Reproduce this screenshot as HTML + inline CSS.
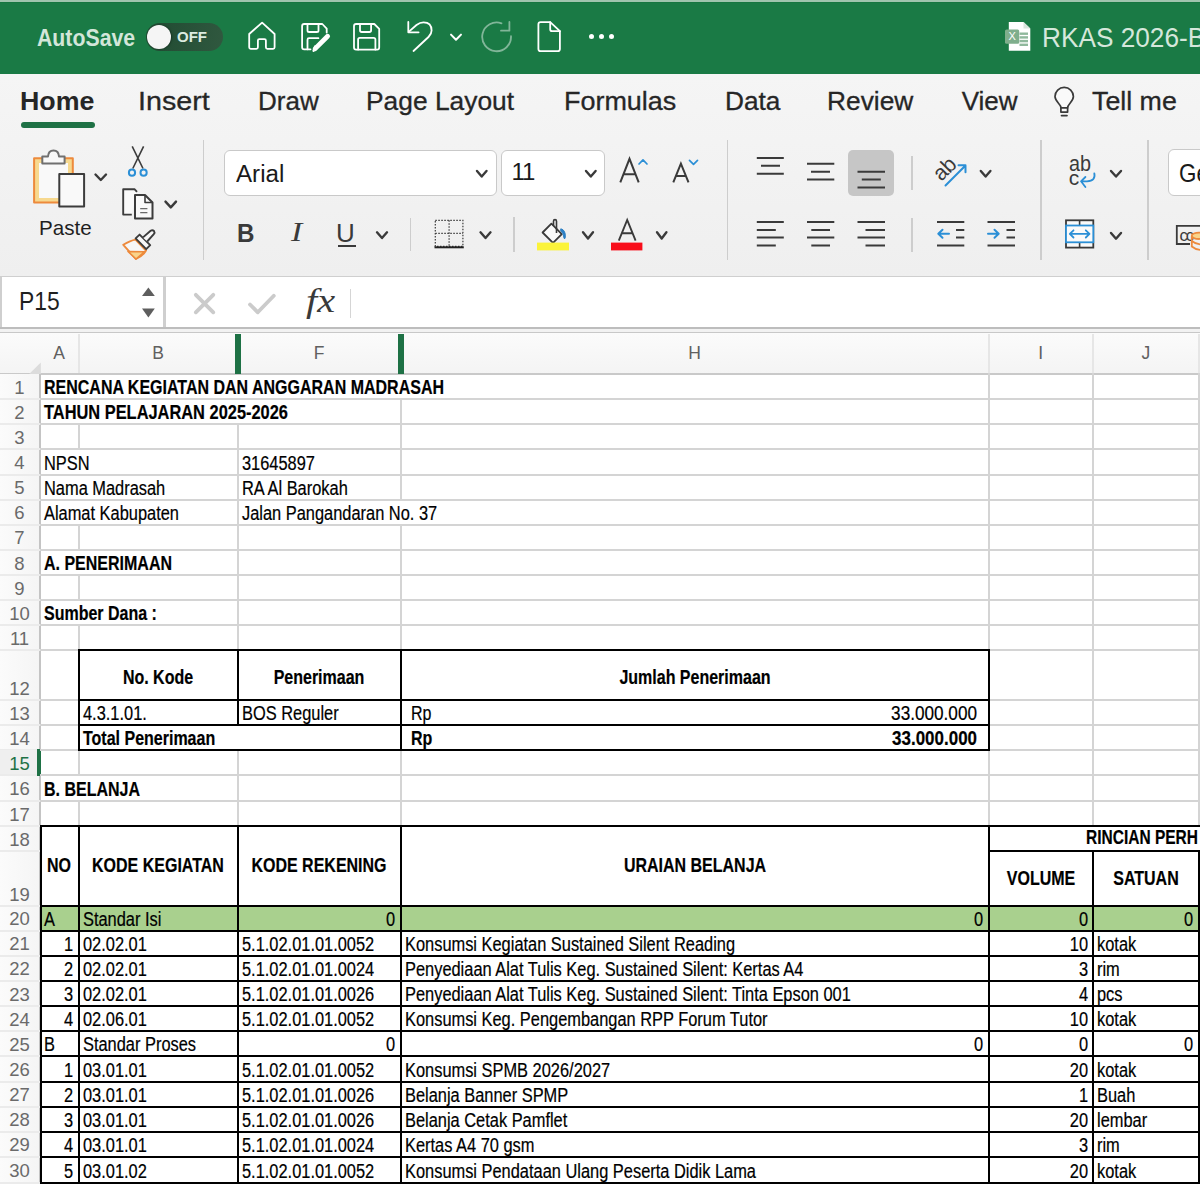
<!DOCTYPE html>
<html><head><meta charset="utf-8">
<style>
html,body{margin:0;padding:0;width:1200px;height:1184px;overflow:hidden;background:#fff;font-family:"Liberation Sans",sans-serif;}
#root{position:absolute;left:0;top:0;width:1200px;height:1184px;overflow:hidden}
#root div{position:absolute}
.t{font-size:20px;line-height:22px;white-space:nowrap;color:#000;-webkit-text-stroke:0.2px currentColor}
.rn{font-size:18.5px;line-height:22px;text-align:center;white-space:nowrap}
.ch{font-size:17.5px;line-height:22px;text-align:center;color:#606060;white-space:nowrap}
.tab{font-size:26px;line-height:30px;color:#262626;white-space:nowrap}
svg{position:absolute;overflow:visible}
</style></head><body><div id="root">
<!-- title bar -->
<div style="left:0;top:0;width:1200px;height:1.5px;background:#a0c4ae"></div>
<div style="left:0;top:1.5px;width:1200px;height:72px;background:#1a7a45"></div>
<div style="left:0;top:2px;width:1200px;height:1px;background:#167640"></div>
<div style="left:36.5px;top:23px;font-size:23px;line-height:30px;font-weight:bold;color:#d3e6d9;white-space:nowrap;transform:scaleX(0.925);transform-origin:0 0">AutoSave</div>
<div style="left:146px;top:23px;width:77px;height:27.5px;border-radius:14px;background:linear-gradient(100deg,#1f4a31,#30583f)"></div>
<div style="left:147px;top:24.7px;width:24px;height:24px;border-radius:12px;background:#f5f5f5;box-shadow:1px 0 2px rgba(0,0,0,0.35)"></div>
<div style="left:177px;top:27px;font-size:15px;line-height:20px;font-weight:bold;color:#dcebe0;white-space:nowrap">OFF</div>
<svg style="left:0;top:0" width="1200" height="74" viewBox="0 0 1200 74" fill="none" stroke="#fff" stroke-width="1.8" stroke-linejoin="round" stroke-linecap="round">
  <!-- home -->
  <path d="M249.2 34 L262.1 22.6 L274.6 34 L274.6 47.3 Q274.6 48.8 273.1 48.8 L267.4 48.8 Q265.9 48.8 265.9 47.3 L265.9 40.6 Q265.9 39.1 264.4 39.1 L259.4 39.1 Q257.9 39.1 257.9 40.6 L257.9 47.3 Q257.9 48.8 256.4 48.8 L250.7 48.8 Q249.2 48.8 249.2 47.3 Z"/>
  <!-- save as -->
  <path d="M310.5 49.3 L304.2 49.3 Q302.1 49.3 302.1 47.2 L302.1 26.1 Q302.1 24 304.2 24 L322.3 24 L326.7 28.6 L326.7 32.6"/>
  <path d="M307.5 24 L307.5 30.4 Q307.5 32 309.1 32 L316.9 32 Q318.5 32 318.5 30.4 L318.5 24"/>
  <path d="M307.5 49.3 L307.5 39.7 Q307.5 38.2 309 38.2 L318.4 38.2"/>
  <path d="M315.2 48.6 L327.6 36.3" stroke-width="4.8"/>
  <path d="M313.6 50.8 L315.2 46.6" stroke-width="2.4"/>
  <!-- save -->
  <path d="M356.1 24 L374.3 24 L379.2 28.9 L379.2 47.5 Q379.2 49.6 377.1 49.6 L356.1 49.6 Q354 49.6 354 47.5 L354 26.1 Q354 24 356.1 24 Z"/>
  <path d="M360 24 L360 30.3 Q360 32 361.7 32 L369.4 32 Q371.1 32 371.1 30.3 L371.1 24"/>
  <path d="M358.1 49.6 L358.1 39.6 Q358.1 37.9 359.8 37.9 L373.7 37.9 Q375.4 37.9 375.4 39.6 L375.4 49.6"/>
  <!-- undo -->
  <path d="M408.3 22 L408.3 32.3 L418.6 32.3"/>
  <path d="M409.5 31.2 L416.5 25 Q420 22.4 423.5 22.4 Q431.6 22.4 431.6 30.6 Q431.6 34 428.5 37 L413.5 51"/>
  <!-- chevron -->
  <path d="M451 34.6 L456 39.8 L461 34.6" stroke-width="2"/>
  <!-- redo -->
  <g stroke="rgba(255,255,255,0.45)">
  <path d="M511 36.2 A14.4 14.4 0 1 1 501.5 23.3"/>
  <path d="M501 30.7 L509.4 30.7 L509.4 22"/>
  </g>
  <!-- new doc -->
  <path d="M550.2 22.1 L540.6 22.1 Q538.4 22.1 538.4 24.3 L538.4 49 Q538.4 51.2 540.6 51.2 L557.7 51.2 Q559.9 51.2 559.9 49 L559.9 31.2 Z"/>
  <path d="M550.2 22.1 L550.2 29.2 Q550.2 31.2 552.2 31.2 L559.9 31.2"/>
</svg>
<div style="left:589px;top:34.2px;width:5px;height:5px;border-radius:3px;background:#fff"></div>
<div style="left:599px;top:34.2px;width:5px;height:5px;border-radius:3px;background:#fff"></div>
<div style="left:609px;top:34.2px;width:5px;height:5px;border-radius:3px;background:#fff"></div>
<!-- excel doc icon -->
<svg style="left:0;top:0" width="1200" height="74" viewBox="0 0 1200 74">
  <path d="M1008.8 22 L1023.5 22 L1030.3 28.6 L1030.3 50.7 L1008.8 50.7 Z" fill="#fff"/>
  <path d="M1023.5 22 L1023.5 28.6 L1030.3 28.6 Z" fill="#d9e6dd"/>
  <rect x="1019.5" y="32.5" width="8.5" height="2.4" fill="#8fb89c"/>
  <rect x="1019.5" y="36.2" width="8.5" height="2.4" fill="#8fb89c"/>
  <rect x="1019.5" y="39.9" width="8.5" height="2.4" fill="#8fb89c"/>
  <rect x="1019.5" y="43.6" width="8.5" height="2.4" fill="#8fb89c"/>
  <rect x="1005" y="29.5" width="14.2" height="14.2" rx="1.5" fill="#7fae8c"/>
  <text x="1012.1" y="40.4" font-family="Liberation Sans" font-size="11" fill="#fff" text-anchor="middle">X</text>
</svg>
<div style="left:1041.5px;top:22px;font-size:27.6px;line-height:32px;color:#d5e7db;white-space:nowrap;transform:scaleX(0.95);transform-origin:0 0">RKAS 2026-B</div>

<!-- formula bar -->
<div style="left:0;top:277px;width:1200px;height:50px;background:#fff"></div>
<div style="left:0;top:277px;width:2px;height:50px;background:#cfcfcf"></div>
<div style="left:163px;top:277px;width:3px;height:50px;background:#cfcfcf"></div>
<div style="left:0;top:327px;width:1200px;height:1.5px;background:#bdbdbd"></div>
<div style="left:0;top:328.5px;width:1200px;height:3px;background:#f2f2f2"></div>
<div style="left:0;top:331.5px;width:1200px;height:1.5px;background:#c8c8c8"></div>
<div style="left:19px;top:285.5px;font-size:25.4px;line-height:30px;color:#1f1f1f;transform:scaleX(0.9);transform-origin:0 0">P15</div>

<!-- ribbon -->
<div style="left:0;top:73.5px;width:1200px;height:202px;background:linear-gradient(#f5f5f5,#efefef)"></div>
<div style="left:0;top:275.5px;width:1200px;height:1.5px;background:#cfcfcf"></div>
<!-- tabs -->
<div class="tab" style="left:19.94px;top:86px;font-weight:bold;transform:scaleX(1.03);transform-origin:0 0">Home</div>
<div style="left:21px;top:122px;width:74px;height:6px;border-radius:3px;background:#1e7145"></div>
<div class="tab" style="left:137.99px;top:86px;-webkit-text-stroke:0.3px #262626;transform:scaleX(1.103);transform-origin:0 0">Insert</div>
<div class="tab" style="left:258.00px;top:86px;-webkit-text-stroke:0.3px #262626;transform:scaleX(1.0);transform-origin:0 0">Draw</div>
<div class="tab" style="left:365.97px;top:86px;-webkit-text-stroke:0.3px #262626;transform:scaleX(1.014);transform-origin:0 0">Page Layout</div>
<div class="tab" style="left:564.18px;top:86px;-webkit-text-stroke:0.3px #262626;transform:scaleX(1.036);transform-origin:0 0">Formulas</div>
<div class="tab" style="left:724.98px;top:86px;-webkit-text-stroke:0.3px #262626;transform:scaleX(1.01);transform-origin:0 0">Data</div>
<div class="tab" style="left:826.98px;top:86px;-webkit-text-stroke:0.3px #262626;transform:scaleX(1.012);transform-origin:0 0">Review</div>
<div class="tab" style="left:961.70px;top:86px;-webkit-text-stroke:0.3px #262626;transform:scaleX(1.0);transform-origin:0 0">View</div>
<div class="tab" style="left:1092.37px;top:86px;-webkit-text-stroke:0.3px #262626;transform:scaleX(1.03);transform-origin:0 0">Tell me</div>
<svg style="left:0;top:0" width="1200" height="280" viewBox="0 0 1200 280" fill="none" stroke="#3a3a3a" stroke-width="1.6" stroke-linecap="round" stroke-linejoin="round">
  <!-- bulb -->
  <path d="M1061 107.8 C1061 104 1055 101.5 1055 96.6 A9.2 9.2 0 1 1 1073.4 96.6 C1073.4 101.5 1067.6 104 1067.6 107.8 Z" fill="#fafafa" stroke-width="1.7"/>
  <rect x="1060.9" y="107.8" width="6.7" height="4.3" fill="#fafafa" stroke-width="1.7"/>
  <path d="M1061.6 115.6 H1066.9" stroke-width="1.9"/>
</svg>

<!-- clipboard group -->
<svg style="left:0;top:0" width="1200" height="280" viewBox="0 0 1200 280" fill="none" stroke-linejoin="round">
  <!-- paste board -->
  <rect x="34.1" y="158.2" width="38.7" height="44.3" fill="#f7d98f" stroke="#ed8a3c" stroke-width="2"/>
  <rect x="39" y="163" width="29" height="35" fill="#f9f9f9" stroke="none"/>
  <path d="M42.3 163.5 V156.5 H48 Q48.3 150.4 53.5 150.4 Q58.7 150.4 59 156.5 H64.6 V163.5 Z" fill="#f9f9f9" stroke="#707070" stroke-width="2"/>
  <rect x="59.3" y="174" width="24.8" height="32.5" fill="#f9f9f9" stroke="#3c3c3c" stroke-width="2"/>
  <path d="M95.5 174.5 L100.8 180 L106 174.5" stroke="#3a3a3a" stroke-width="2.4" stroke-linecap="round"/>
  <!-- scissors -->
  <path d="M132.2 146.3 L143 168.5 M143.6 146.3 L132.8 168.5" stroke="#3c3c3c" stroke-width="1.6"/>
  <circle cx="132" cy="172.7" r="3.1" stroke="#2b8fd6" stroke-width="2"/>
  <circle cx="143.6" cy="172.7" r="3.1" stroke="#2b8fd6" stroke-width="2"/>
  <!-- copy -->
  <path d="M131.8 214.6 L123.2 214.6 L123.2 189.3 L134.7 189.3 L137 191.8" fill="#f9f9f9" stroke="#3c3c3c" stroke-width="1.9"/>
  <path d="M135 218.5 L135 195 L145 195 L152.5 202.5 L152.5 218.5 Z" fill="#f9f9f9" stroke="#3c3c3c" stroke-width="2"/>
  <path d="M145 195 L145 202.5 L152.5 202.5" stroke="#3c3c3c" stroke-width="1.6"/>
  <path d="M140.2 208.6 L147.4 208.6 M140.2 212.6 L147.4 212.6" stroke="#6a6a6a" stroke-width="1.3"/>
  <path d="M165.5 201.6 L170.8 207.4 L176 201.6" stroke="#3a3a3a" stroke-width="2.4" stroke-linecap="round"/>
  <!-- format painter -->
  <path d="M123.3 244.8 Q130.5 240.4 135.5 239.6 L146 250.5 Q143 255.8 136 259 Z" fill="#f7f7f7" stroke="#ed8a3c" stroke-width="1.9"/>
  <path d="M128 251.5 L144.5 251.8 L136 259 Z" fill="#f9d48b" stroke="#ed8a3c" stroke-width="1.6"/>
  <path d="M135.6 238.4 L139.6 234.6 L150.2 245.2 L146.2 249.2 Z" fill="#f7f7f7" stroke="#3c3c3c" stroke-width="1.9"/>
  <path d="M143 237.4 L150.6 230.8 Q152.5 229.5 154 231 Q155.2 232.6 153.8 234.2 L147.2 241.5" fill="#f7f7f7" stroke="#3c3c3c" stroke-width="1.9"/>
</svg>
<div style="left:39px;top:216px;font-size:20.6px;line-height:24px;color:#1f1f1f;white-space:nowrap">Paste</div>
<div style="left:202.5px;top:140px;width:1.5px;height:120px;background:#cdcdcd"></div>

<!-- font group -->
<div style="left:223.5px;top:149.5px;width:271px;height:44.5px;border:1px solid #c9c9c9;border-radius:6px;background:#fff"></div>
<div style="left:235.5px;top:159.5px;font-size:23px;line-height:28px;color:#1a1a1a;transform:scaleX(1.05);transform-origin:0 0">Arial</div>
<div style="left:501px;top:150px;width:102px;height:44px;border:1px solid #c9c9c9;border-radius:6px;background:#fff"></div>
<div style="left:511.5px;top:158px;font-size:24px;line-height:28px;color:#1a1a1a;letter-spacing:-1px">11</div>
<svg style="left:0;top:0" width="1200" height="280" viewBox="0 0 1200 280" fill="none" stroke="#3a3a3a" stroke-width="2.4" stroke-linecap="round" stroke-linejoin="round">
  <path d="M477 171 L481.7 176.5 L486.5 171"/>
  <path d="M586 171 L590.8 176.5 L595.6 171"/>
  <path d="M377 232.3 L382 238 L387 232.3"/>
  <path d="M480.5 232.3 L485.5 238 L490.5 232.3"/>
  <path d="M583 232.3 L588 238.5 L593 232.3"/>
  <path d="M657 232.3 L661.7 238.5 L666.4 232.3"/>
  <path d="M980.8 171 L985.6 176.5 L990.4 171"/>
  <path d="M1111 171 L1116 176.5 L1121 171"/>
  <path d="M1111 233 L1116 238.7 L1121 233"/>
</svg>
<!-- grow/shrink -->
<svg style="left:0;top:0" width="1200" height="280" viewBox="0 0 1200 280" fill="none" stroke="#3a3a3a" stroke-width="2" stroke-linejoin="miter">
  <path d="M620.3 182.4 L629.5 158.8 L638.7 182.4 M623.6 174.2 H635.4"/>
  <path d="M673.3 182.4 L680.9 163.6 L688.5 182.4 M676 176 H685.8"/>
  <path d="M618.8 240.6 L627.2 220 L635.6 240.6 M621.9 233.3 H632.5" stroke-width="1.9"/>
</svg>
<svg style="left:0;top:0" width="1200" height="280" viewBox="0 0 1200 280" fill="none" stroke="#2b8fd6" stroke-width="1.7" stroke-linecap="round" stroke-linejoin="round">
  <path d="M639 164 L643 159.8 L647 164"/>
  <path d="M689.5 160.3 L693.5 164.3 L697.5 160.3"/>
</svg>
<!-- B I U -->
<div style="left:237px;top:218px;font-size:26px;line-height:30px;font-weight:bold;color:#3a3a3a;transform:scaleX(0.93);transform-origin:0 0">B</div>
<div style="left:291px;top:217px;font-size:27px;line-height:30px;font-style:italic;font-family:'Liberation Serif';color:#3a3a3a;transform:scaleX(1.25);transform-origin:0 0">I</div>
<div style="left:336px;top:218px;font-size:26px;line-height:30px;color:#3a3a3a">U</div>
<div style="left:337.5px;top:244.5px;width:18px;height:2px;background:#3a3a3a"></div>
<div style="left:409.5px;top:217.5px;width:1.5px;height:33.5px;background:#cdcdcd"></div>
<!-- borders icon -->
<svg style="left:0;top:0" width="1200" height="280" viewBox="0 0 1200 280" fill="none">
  <rect x="435.3" y="220.3" width="27.6" height="26" stroke="#3a3a3a" stroke-width="1.2" stroke-dasharray="1.5 1.5"/>
  <path d="M449.1 220.3 L449.1 246.3 M435.3 233.3 L462.9 233.3" stroke="#3a3a3a" stroke-width="1.2" stroke-dasharray="1.5 1.5"/>
  <path d="M434.5 247.3 L463.8 247.3" stroke="#222" stroke-width="2"/>
</svg>
<div style="left:513px;top:217px;width:1.5px;height:35px;background:#cdcdcd"></div>
<!-- fill color -->
<svg style="left:0;top:0" width="1200" height="280" viewBox="0 0 1200 280" fill="none" stroke-linejoin="round">
  <path d="M542.6 232.5 L551.4 223.7 L561.8 234.1 L553 242.9 Z" fill="#fafafa" stroke="#3a3a3a" stroke-width="1.8"/>
  <path d="M553.5 225.8 L553.5 221.2 Q553.5 219.6 555 219.6 Q556.5 219.6 556.5 221.2 L556.5 233" stroke="#3a3a3a" stroke-width="1.6"/>
  <path d="M560.8 228.8 Q565.8 229.8 565.3 237.5 Q564.5 240 564 238 Q563.5 233 560.6 230.5 Z" fill="#2b7fc4" stroke="#2b7fc4" stroke-width="1"/>
  <rect x="537" y="242.6" width="32" height="7.8" fill="#fbf33a"/>
  <rect x="611" y="242.6" width="31.4" height="7.8" fill="#f80d1a"/>
</svg>
<div style="left:726.5px;top:140px;width:1.5px;height:120px;background:#cdcdcd"></div>

<!-- alignment group -->
<div style="left:848px;top:149.5px;width:46.3px;height:46.3px;border-radius:5px;background:#c6c6c6"></div>
<svg style="left:0;top:0" width="1200" height="280" viewBox="0 0 1200 280" fill="none" stroke="#3a3a3a" stroke-width="2">
  <path d="M756.8 158 H783.8 M761 165.8 H780 M756.8 173.8 H783.8"/>
  <path d="M807 163.8 H834.3 M811 171.8 H830 M807 179.5 H834.3"/>
  <path d="M857.5 171.8 H885 M861.8 179.5 H880.8 M857.5 187.5 H885"/>
  <path d="M756.8 222 H783.8 M756.8 230 H775.8 M756.8 237.6 H783.8 M756.8 245.5 H775.8"/>
  <path d="M807 222 H834.3 M811.3 230 H830 M807 237.6 H834.3 M811.3 245.5 H830"/>
  <path d="M857.5 222 H885 M865.5 230 H885 M857.5 237.6 H885 M865.5 245.5 H885"/>
  <path d="M937 222 H964.3 M956 230 H964.3 M956 237.6 H964.3 M937 245.5 H964.3"/>
  <path d="M987.5 222 H1015 M1006.5 230 H1015 M1006.5 237.6 H1015 M987.5 245.5 H1015"/>
</svg>
<svg style="left:0;top:0" width="1200" height="280" viewBox="0 0 1200 280" fill="none" stroke="#2b8fd6" stroke-width="2" stroke-linecap="round" stroke-linejoin="round">
  <path d="M949 233.8 H938.5 M942.5 229.8 L938.3 233.8 L942.5 237.8"/>
  <path d="M988 233.8 H998.5 M994.5 229.8 L998.7 233.8 L994.5 237.8"/>
  <path d="M945.5 185.5 L965.5 165.5 M958.5 165.3 H965.5 V172.3"/>
</svg>
<div style="left:911px;top:155.5px;width:1.5px;height:34px;background:#cdcdcd"></div>
<div style="left:911px;top:217.5px;width:1.5px;height:34.5px;background:#cdcdcd"></div>
<!-- orientation text ab rotated -->
<div style="left:932.5px;top:158.5px;font-size:21.5px;line-height:20px;color:#3a3a3a;transform:rotate(-45deg);transform-origin:50% 50%;letter-spacing:-0.5px">ab</div>
<div style="left:1040px;top:140px;width:1.5px;height:120px;background:#cdcdcd"></div>
<!-- wrap text -->
<div style="left:1068.8px;top:152.5px;font-size:21.5px;line-height:22px;color:#3a3a3a;transform:scaleX(0.92);transform-origin:0 0">ab</div>
<div style="left:1068.8px;top:167px;font-size:21px;line-height:22px;color:#3a3a3a">c</div>
<svg style="left:0;top:0" width="1200" height="280" viewBox="0 0 1200 280" fill="none" stroke="#2b8fd6" stroke-width="1.8" stroke-linecap="round" stroke-linejoin="round">
  <path d="M1094.3 173.3 Q1096 181 1087 181.3 L1081.5 181.3 M1085.4 177 L1081 181.3 L1085.4 187"/>
</svg>
<!-- merge -->
<svg style="left:0;top:0" width="1200" height="280" viewBox="0 0 1200 280" fill="none">
  <rect x="1066" y="220.3" width="27.3" height="27.3" stroke="#3a3a3a" stroke-width="1.8" fill="#fafafa"/>
  <path d="M1079.6 220.3 V247.6" stroke="#3a3a3a" stroke-width="1.6"/>
  <rect x="1066" y="225.5" width="27.3" height="16.8" stroke="#2b8fd6" stroke-width="1.8" fill="#fafafa"/>
  <path d="M1070 233.9 H1089.3 M1073.5 230.3 L1069.8 233.9 L1073.5 237.5 M1085.8 230.3 L1089.5 233.9 L1085.8 237.5" stroke="#2b8fd6" stroke-width="1.8" stroke-linecap="round" stroke-linejoin="round"/>
</svg>
<div style="left:1147px;top:140px;width:1.5px;height:120px;background:#cdcdcd"></div>
<!-- number format box -->
<div style="left:1168px;top:149.2px;width:60px;height:44.5px;border:1px solid #c9c9c9;border-radius:6px;background:#fff"></div>
<div style="left:1179px;top:157.5px;font-size:26px;line-height:30px;color:#1a1a1a;transform:scaleX(0.86);transform-origin:0 0">Ge</div>
<!-- conditional formatting icon -->
<svg style="left:0;top:0" width="1200" height="280" viewBox="0 0 1200 280" fill="none">
  <path d="M1190 244 L1176.8 244 L1176.8 225.9 L1200 225.9" stroke="#3a3a3a" stroke-width="1.8"/>
  <text x="1179.5" y="240.8" font-family="Liberation Sans" font-size="16.5" fill="#3a3a3a" letter-spacing="-2">cc</text>
  <path d="M1191.8 236 V246.5 Q1196 250 1202 250 M1191.8 241 Q1196 244.5 1202 244.5" stroke="#ed8a3c" stroke-width="1.8"/>
  <ellipse cx="1199" cy="235.8" rx="7.2" ry="3.2" fill="#f9d48b" stroke="#ed8a3c" stroke-width="1.8"/>
</svg>

<!-- formula bar icons -->
<svg style="left:0;top:0" width="1200" height="340" viewBox="0 0 1200 340" fill="none" stroke-linecap="round" stroke-linejoin="round">
  <path d="M142 296 L148.4 287.5 L154.8 296 Z" fill="#5e5e5e"/>
  <path d="M142 308.5 L148.4 317.5 L154.8 308.5 Z" fill="#5e5e5e"/>
  <path d="M195.8 294.8 L213.3 312.3 M213.3 294.8 L195.8 312.3" stroke="#cbcbcb" stroke-width="3.8"/>
  <path d="M250 304.5 L257.8 312.3 L273.8 295.8" stroke="#cbcbcb" stroke-width="3.8"/>
</svg>
<div style="left:305.5px;top:283px;font-size:33px;line-height:36px;font-family:'Liberation Serif';font-style:italic;color:#3a3a3a;letter-spacing:0px;transform:scaleX(1.22);transform-origin:0 0">fx</div>
<div style="left:349.5px;top:289px;width:1.2px;height:29px;background:#d5d5d5"></div>

<!-- column header -->
<div style="left:0;top:333px;width:1200px;height:41px;background:linear-gradient(#fbfbfb,#f4f4f4)"></div>
<div style="left:0;top:373px;width:1200px;height:1.5px;background:#c9c9c9"></div>
<svg style="left:0;top:0" width="60" height="380" viewBox="0 0 60 380"><path d="M29.2 374 L40.8 362.5 L40.8 374 Z" fill="#dcdcdc"/></svg>
<div style="left:77.5px;top:334px;width:2px;height:39px;background:#e6e6e6"></div>
<div style="left:236.5px;top:334px;width:2px;height:39px;background:#e6e6e6"></div>
<div style="left:399.5px;top:334px;width:2px;height:39px;background:#e6e6e6"></div>
<div style="left:987.5px;top:334px;width:2px;height:39px;background:#e6e6e6"></div>
<div style="left:1092.0px;top:334px;width:2px;height:39px;background:#e6e6e6"></div>
<div style="left:1197.5px;top:334px;width:2px;height:39px;background:#e6e6e6"></div>
<div style="left:235.2px;top:334px;width:5.6px;height:40px;background:#1e7145"></div>
<div style="left:398.2px;top:334px;width:5.6px;height:40px;background:#1e7145"></div>
<div class="ch" style="left:29.2px;width:60px;top:342px">A</div>
<div class="ch" style="left:128.0px;width:60px;top:342px">B</div>
<div class="ch" style="left:289.0px;width:60px;top:342px">F</div>
<div class="ch" style="left:664.5px;width:60px;top:342px">H</div>
<div class="ch" style="left:1010.8px;width:60px;top:342px">I</div>
<div class="ch" style="left:1115.8px;width:60px;top:342px">J</div>
<div style="left:0;top:374px;width:40px;height:810px;background:linear-gradient(90deg,#fbfbfb,#f5f5f5)"></div>
<div style="left:39px;top:374px;width:2px;height:810px;background:#c4c4c4"></div>
<div style="left:0;top:374.00px;width:40px;height:25.13px;background:transparent"></div>
<div style="left:0;top:398.13px;width:40px;height:2px;background:#ebebeb"></div>
<div class="rn" style="left:0;width:39px;top:376.63px;color:#6a6a6a">1</div>
<div style="left:0;top:399.13px;width:40px;height:25.13px;background:transparent"></div>
<div style="left:0;top:423.26px;width:40px;height:2px;background:#ebebeb"></div>
<div class="rn" style="left:0;width:39px;top:401.76px;color:#6a6a6a">2</div>
<div style="left:0;top:424.26px;width:40px;height:25.13px;background:transparent"></div>
<div style="left:0;top:448.39px;width:40px;height:2px;background:#ebebeb"></div>
<div class="rn" style="left:0;width:39px;top:426.89px;color:#6a6a6a">3</div>
<div style="left:0;top:449.39px;width:40px;height:25.13px;background:transparent"></div>
<div style="left:0;top:473.52px;width:40px;height:2px;background:#ebebeb"></div>
<div class="rn" style="left:0;width:39px;top:452.02px;color:#6a6a6a">4</div>
<div style="left:0;top:474.52px;width:40px;height:25.13px;background:transparent"></div>
<div style="left:0;top:498.65px;width:40px;height:2px;background:#ebebeb"></div>
<div class="rn" style="left:0;width:39px;top:477.15px;color:#6a6a6a">5</div>
<div style="left:0;top:499.65px;width:40px;height:25.13px;background:transparent"></div>
<div style="left:0;top:523.78px;width:40px;height:2px;background:#ebebeb"></div>
<div class="rn" style="left:0;width:39px;top:502.28px;color:#6a6a6a">6</div>
<div style="left:0;top:524.78px;width:40px;height:25.13px;background:transparent"></div>
<div style="left:0;top:548.91px;width:40px;height:2px;background:#ebebeb"></div>
<div class="rn" style="left:0;width:39px;top:527.41px;color:#6a6a6a">7</div>
<div style="left:0;top:549.91px;width:40px;height:25.13px;background:transparent"></div>
<div style="left:0;top:574.04px;width:40px;height:2px;background:#ebebeb"></div>
<div class="rn" style="left:0;width:39px;top:552.54px;color:#6a6a6a">8</div>
<div style="left:0;top:575.04px;width:40px;height:25.13px;background:transparent"></div>
<div style="left:0;top:599.17px;width:40px;height:2px;background:#ebebeb"></div>
<div class="rn" style="left:0;width:39px;top:577.67px;color:#6a6a6a">9</div>
<div style="left:0;top:600.17px;width:40px;height:25.13px;background:transparent"></div>
<div style="left:0;top:624.30px;width:40px;height:2px;background:#ebebeb"></div>
<div class="rn" style="left:0;width:39px;top:602.80px;color:#6a6a6a">10</div>
<div style="left:0;top:625.30px;width:40px;height:25.10px;background:transparent"></div>
<div style="left:0;top:649.40px;width:40px;height:2px;background:#ebebeb"></div>
<div class="rn" style="left:0;width:39px;top:627.90px;color:#6a6a6a">11</div>
<div style="left:0;top:650.40px;width:40px;height:49.60px;background:transparent"></div>
<div style="left:0;top:699.00px;width:40px;height:2px;background:#ebebeb"></div>
<div class="rn" style="left:0;width:39px;top:677.50px;color:#6a6a6a">12</div>
<div style="left:0;top:700.00px;width:40px;height:25.00px;background:transparent"></div>
<div style="left:0;top:724.00px;width:40px;height:2px;background:#ebebeb"></div>
<div class="rn" style="left:0;width:39px;top:702.50px;color:#6a6a6a">13</div>
<div style="left:0;top:725.00px;width:40px;height:25.00px;background:transparent"></div>
<div style="left:0;top:749.00px;width:40px;height:2px;background:#ebebeb"></div>
<div class="rn" style="left:0;width:39px;top:727.50px;color:#6a6a6a">14</div>
<div style="left:0;top:750.00px;width:40px;height:25.20px;background:#efefef"></div>
<div style="left:0;top:774.20px;width:40px;height:2px;background:#ebebeb"></div>
<div class="rn" style="left:0;width:39px;top:752.70px;color:#1e7145">15</div>
<div style="left:0;top:775.20px;width:40px;height:25.30px;background:transparent"></div>
<div style="left:0;top:799.50px;width:40px;height:2px;background:#ebebeb"></div>
<div class="rn" style="left:0;width:39px;top:778.00px;color:#6a6a6a">16</div>
<div style="left:0;top:800.50px;width:40px;height:25.50px;background:transparent"></div>
<div style="left:0;top:825.00px;width:40px;height:2px;background:#ebebeb"></div>
<div class="rn" style="left:0;width:39px;top:803.50px;color:#6a6a6a">17</div>
<div style="left:0;top:826.00px;width:40px;height:25.00px;background:transparent"></div>
<div style="left:0;top:850.00px;width:40px;height:2px;background:#ebebeb"></div>
<div class="rn" style="left:0;width:39px;top:828.50px;color:#6a6a6a">18</div>
<div style="left:0;top:851.00px;width:40px;height:55.00px;background:transparent"></div>
<div style="left:0;top:905.00px;width:40px;height:2px;background:#ebebeb"></div>
<div class="rn" style="left:0;width:39px;top:883.50px;color:#6a6a6a">19</div>
<div style="left:0;top:906.00px;width:40px;height:24.70px;background:transparent"></div>
<div style="left:0;top:929.70px;width:40px;height:2px;background:#ebebeb"></div>
<div class="rn" style="left:0;width:39px;top:908.20px;color:#6a6a6a">20</div>
<div style="left:0;top:930.70px;width:40px;height:25.14px;background:transparent"></div>
<div style="left:0;top:954.84px;width:40px;height:2px;background:#ebebeb"></div>
<div class="rn" style="left:0;width:39px;top:933.34px;color:#6a6a6a">21</div>
<div style="left:0;top:955.84px;width:40px;height:25.14px;background:transparent"></div>
<div style="left:0;top:979.98px;width:40px;height:2px;background:#ebebeb"></div>
<div class="rn" style="left:0;width:39px;top:958.48px;color:#6a6a6a">22</div>
<div style="left:0;top:980.98px;width:40px;height:25.14px;background:transparent"></div>
<div style="left:0;top:1005.12px;width:40px;height:2px;background:#ebebeb"></div>
<div class="rn" style="left:0;width:39px;top:983.62px;color:#6a6a6a">23</div>
<div style="left:0;top:1006.12px;width:40px;height:25.14px;background:transparent"></div>
<div style="left:0;top:1030.26px;width:40px;height:2px;background:#ebebeb"></div>
<div class="rn" style="left:0;width:39px;top:1008.76px;color:#6a6a6a">24</div>
<div style="left:0;top:1031.26px;width:40px;height:25.14px;background:transparent"></div>
<div style="left:0;top:1055.40px;width:40px;height:2px;background:#ebebeb"></div>
<div class="rn" style="left:0;width:39px;top:1033.90px;color:#6a6a6a">25</div>
<div style="left:0;top:1056.40px;width:40px;height:25.14px;background:transparent"></div>
<div style="left:0;top:1080.54px;width:40px;height:2px;background:#ebebeb"></div>
<div class="rn" style="left:0;width:39px;top:1059.04px;color:#6a6a6a">26</div>
<div style="left:0;top:1081.54px;width:40px;height:25.14px;background:transparent"></div>
<div style="left:0;top:1105.68px;width:40px;height:2px;background:#ebebeb"></div>
<div class="rn" style="left:0;width:39px;top:1084.18px;color:#6a6a6a">27</div>
<div style="left:0;top:1106.68px;width:40px;height:25.14px;background:transparent"></div>
<div style="left:0;top:1130.82px;width:40px;height:2px;background:#ebebeb"></div>
<div class="rn" style="left:0;width:39px;top:1109.32px;color:#6a6a6a">28</div>
<div style="left:0;top:1131.82px;width:40px;height:25.14px;background:transparent"></div>
<div style="left:0;top:1155.96px;width:40px;height:2px;background:#ebebeb"></div>
<div class="rn" style="left:0;width:39px;top:1134.46px;color:#6a6a6a">29</div>
<div style="left:0;top:1156.96px;width:40px;height:25.84px;background:transparent"></div>
<div style="left:0;top:1181.80px;width:40px;height:2px;background:#ebebeb"></div>
<div class="rn" style="left:0;width:39px;top:1160.30px;color:#6a6a6a">30</div>
<div style="left:37px;top:749.00px;width:4px;height:27.20px;background:#1e7145"></div>
<div style="left:40.00px;top:906.00px;width:1160.00px;height:24.70px;background:#a9d08e"></div>
<div style="left:40.00px;top:398.13px;width:1160.00px;height:2.00px;background:#d4d4d4"></div>
<div style="left:40.00px;top:423.26px;width:1160.00px;height:2.00px;background:#d4d4d4"></div>
<div style="left:40.00px;top:448.39px;width:1160.00px;height:2.00px;background:#d4d4d4"></div>
<div style="left:40.00px;top:473.52px;width:1160.00px;height:2.00px;background:#d4d4d4"></div>
<div style="left:40.00px;top:498.65px;width:1160.00px;height:2.00px;background:#d4d4d4"></div>
<div style="left:40.00px;top:523.78px;width:1160.00px;height:2.00px;background:#d4d4d4"></div>
<div style="left:40.00px;top:548.91px;width:1160.00px;height:2.00px;background:#d4d4d4"></div>
<div style="left:40.00px;top:574.04px;width:1160.00px;height:2.00px;background:#d4d4d4"></div>
<div style="left:40.00px;top:599.17px;width:1160.00px;height:2.00px;background:#d4d4d4"></div>
<div style="left:40.00px;top:624.30px;width:1160.00px;height:2.00px;background:#d4d4d4"></div>
<div style="left:40.00px;top:649.40px;width:1160.00px;height:2.00px;background:#d4d4d4"></div>
<div style="left:40.00px;top:699.00px;width:1160.00px;height:2.00px;background:#d4d4d4"></div>
<div style="left:40.00px;top:724.00px;width:1160.00px;height:2.00px;background:#d4d4d4"></div>
<div style="left:40.00px;top:749.00px;width:1160.00px;height:2.00px;background:#d4d4d4"></div>
<div style="left:40.00px;top:774.20px;width:1160.00px;height:2.00px;background:#d4d4d4"></div>
<div style="left:40.00px;top:799.50px;width:1160.00px;height:2.00px;background:#d4d4d4"></div>
<div style="left:40.00px;top:825.00px;width:1160.00px;height:2.00px;background:#d4d4d4"></div>
<div style="left:988.50px;top:850.00px;width:211.50px;height:2.00px;background:#d4d4d4"></div>
<div style="left:40.00px;top:905.00px;width:1160.00px;height:2.00px;background:#d4d4d4"></div>
<div style="left:40.00px;top:929.70px;width:1160.00px;height:2.00px;background:#d4d4d4"></div>
<div style="left:40.00px;top:954.84px;width:1160.00px;height:2.00px;background:#d4d4d4"></div>
<div style="left:40.00px;top:979.98px;width:1160.00px;height:2.00px;background:#d4d4d4"></div>
<div style="left:40.00px;top:1005.12px;width:1160.00px;height:2.00px;background:#d4d4d4"></div>
<div style="left:40.00px;top:1030.26px;width:1160.00px;height:2.00px;background:#d4d4d4"></div>
<div style="left:40.00px;top:1055.40px;width:1160.00px;height:2.00px;background:#d4d4d4"></div>
<div style="left:40.00px;top:1080.54px;width:1160.00px;height:2.00px;background:#d4d4d4"></div>
<div style="left:40.00px;top:1105.68px;width:1160.00px;height:2.00px;background:#d4d4d4"></div>
<div style="left:40.00px;top:1130.82px;width:1160.00px;height:2.00px;background:#d4d4d4"></div>
<div style="left:40.00px;top:1155.96px;width:1160.00px;height:2.00px;background:#d4d4d4"></div>
<div style="left:40.00px;top:1181.80px;width:1160.00px;height:2.00px;background:#d4d4d4"></div>
<div style="left:987.50px;top:373.00px;width:2.00px;height:27.13px;background:#d4d4d4"></div>
<div style="left:1092.00px;top:373.00px;width:2.00px;height:27.13px;background:#d4d4d4"></div>
<div style="left:1197.50px;top:373.00px;width:2.00px;height:27.13px;background:#d4d4d4"></div>
<div style="left:399.50px;top:398.13px;width:2.00px;height:27.13px;background:#d4d4d4"></div>
<div style="left:987.50px;top:398.13px;width:2.00px;height:27.13px;background:#d4d4d4"></div>
<div style="left:1092.00px;top:398.13px;width:2.00px;height:27.13px;background:#d4d4d4"></div>
<div style="left:1197.50px;top:398.13px;width:2.00px;height:27.13px;background:#d4d4d4"></div>
<div style="left:77.50px;top:423.26px;width:2.00px;height:27.13px;background:#d4d4d4"></div>
<div style="left:236.50px;top:423.26px;width:2.00px;height:27.13px;background:#d4d4d4"></div>
<div style="left:399.50px;top:423.26px;width:2.00px;height:27.13px;background:#d4d4d4"></div>
<div style="left:987.50px;top:423.26px;width:2.00px;height:27.13px;background:#d4d4d4"></div>
<div style="left:1092.00px;top:423.26px;width:2.00px;height:27.13px;background:#d4d4d4"></div>
<div style="left:1197.50px;top:423.26px;width:2.00px;height:27.13px;background:#d4d4d4"></div>
<div style="left:236.50px;top:448.39px;width:2.00px;height:27.13px;background:#d4d4d4"></div>
<div style="left:399.50px;top:448.39px;width:2.00px;height:27.13px;background:#d4d4d4"></div>
<div style="left:987.50px;top:448.39px;width:2.00px;height:27.13px;background:#d4d4d4"></div>
<div style="left:1092.00px;top:448.39px;width:2.00px;height:27.13px;background:#d4d4d4"></div>
<div style="left:1197.50px;top:448.39px;width:2.00px;height:27.13px;background:#d4d4d4"></div>
<div style="left:236.50px;top:473.52px;width:2.00px;height:27.13px;background:#d4d4d4"></div>
<div style="left:399.50px;top:473.52px;width:2.00px;height:27.13px;background:#d4d4d4"></div>
<div style="left:987.50px;top:473.52px;width:2.00px;height:27.13px;background:#d4d4d4"></div>
<div style="left:1092.00px;top:473.52px;width:2.00px;height:27.13px;background:#d4d4d4"></div>
<div style="left:1197.50px;top:473.52px;width:2.00px;height:27.13px;background:#d4d4d4"></div>
<div style="left:236.50px;top:498.65px;width:2.00px;height:27.13px;background:#d4d4d4"></div>
<div style="left:987.50px;top:498.65px;width:2.00px;height:27.13px;background:#d4d4d4"></div>
<div style="left:1092.00px;top:498.65px;width:2.00px;height:27.13px;background:#d4d4d4"></div>
<div style="left:1197.50px;top:498.65px;width:2.00px;height:27.13px;background:#d4d4d4"></div>
<div style="left:77.50px;top:523.78px;width:2.00px;height:27.13px;background:#d4d4d4"></div>
<div style="left:236.50px;top:523.78px;width:2.00px;height:27.13px;background:#d4d4d4"></div>
<div style="left:399.50px;top:523.78px;width:2.00px;height:27.13px;background:#d4d4d4"></div>
<div style="left:987.50px;top:523.78px;width:2.00px;height:27.13px;background:#d4d4d4"></div>
<div style="left:1092.00px;top:523.78px;width:2.00px;height:27.13px;background:#d4d4d4"></div>
<div style="left:1197.50px;top:523.78px;width:2.00px;height:27.13px;background:#d4d4d4"></div>
<div style="left:236.50px;top:548.91px;width:2.00px;height:27.13px;background:#d4d4d4"></div>
<div style="left:399.50px;top:548.91px;width:2.00px;height:27.13px;background:#d4d4d4"></div>
<div style="left:987.50px;top:548.91px;width:2.00px;height:27.13px;background:#d4d4d4"></div>
<div style="left:1092.00px;top:548.91px;width:2.00px;height:27.13px;background:#d4d4d4"></div>
<div style="left:1197.50px;top:548.91px;width:2.00px;height:27.13px;background:#d4d4d4"></div>
<div style="left:77.50px;top:574.04px;width:2.00px;height:27.13px;background:#d4d4d4"></div>
<div style="left:236.50px;top:574.04px;width:2.00px;height:27.13px;background:#d4d4d4"></div>
<div style="left:399.50px;top:574.04px;width:2.00px;height:27.13px;background:#d4d4d4"></div>
<div style="left:987.50px;top:574.04px;width:2.00px;height:27.13px;background:#d4d4d4"></div>
<div style="left:1092.00px;top:574.04px;width:2.00px;height:27.13px;background:#d4d4d4"></div>
<div style="left:1197.50px;top:574.04px;width:2.00px;height:27.13px;background:#d4d4d4"></div>
<div style="left:236.50px;top:599.17px;width:2.00px;height:27.13px;background:#d4d4d4"></div>
<div style="left:399.50px;top:599.17px;width:2.00px;height:27.13px;background:#d4d4d4"></div>
<div style="left:987.50px;top:599.17px;width:2.00px;height:27.13px;background:#d4d4d4"></div>
<div style="left:1092.00px;top:599.17px;width:2.00px;height:27.13px;background:#d4d4d4"></div>
<div style="left:1197.50px;top:599.17px;width:2.00px;height:27.13px;background:#d4d4d4"></div>
<div style="left:77.50px;top:624.30px;width:2.00px;height:27.10px;background:#d4d4d4"></div>
<div style="left:236.50px;top:624.30px;width:2.00px;height:27.10px;background:#d4d4d4"></div>
<div style="left:399.50px;top:624.30px;width:2.00px;height:27.10px;background:#d4d4d4"></div>
<div style="left:987.50px;top:624.30px;width:2.00px;height:27.10px;background:#d4d4d4"></div>
<div style="left:1092.00px;top:624.30px;width:2.00px;height:27.10px;background:#d4d4d4"></div>
<div style="left:1197.50px;top:624.30px;width:2.00px;height:27.10px;background:#d4d4d4"></div>
<div style="left:77.50px;top:649.40px;width:2.00px;height:51.60px;background:#d4d4d4"></div>
<div style="left:236.50px;top:649.40px;width:2.00px;height:51.60px;background:#d4d4d4"></div>
<div style="left:399.50px;top:649.40px;width:2.00px;height:51.60px;background:#d4d4d4"></div>
<div style="left:987.50px;top:649.40px;width:2.00px;height:51.60px;background:#d4d4d4"></div>
<div style="left:1092.00px;top:649.40px;width:2.00px;height:51.60px;background:#d4d4d4"></div>
<div style="left:1197.50px;top:649.40px;width:2.00px;height:51.60px;background:#d4d4d4"></div>
<div style="left:77.50px;top:699.00px;width:2.00px;height:27.00px;background:#d4d4d4"></div>
<div style="left:236.50px;top:699.00px;width:2.00px;height:27.00px;background:#d4d4d4"></div>
<div style="left:399.50px;top:699.00px;width:2.00px;height:27.00px;background:#d4d4d4"></div>
<div style="left:987.50px;top:699.00px;width:2.00px;height:27.00px;background:#d4d4d4"></div>
<div style="left:1092.00px;top:699.00px;width:2.00px;height:27.00px;background:#d4d4d4"></div>
<div style="left:1197.50px;top:699.00px;width:2.00px;height:27.00px;background:#d4d4d4"></div>
<div style="left:77.50px;top:724.00px;width:2.00px;height:27.00px;background:#d4d4d4"></div>
<div style="left:399.50px;top:724.00px;width:2.00px;height:27.00px;background:#d4d4d4"></div>
<div style="left:987.50px;top:724.00px;width:2.00px;height:27.00px;background:#d4d4d4"></div>
<div style="left:1092.00px;top:724.00px;width:2.00px;height:27.00px;background:#d4d4d4"></div>
<div style="left:1197.50px;top:724.00px;width:2.00px;height:27.00px;background:#d4d4d4"></div>
<div style="left:77.50px;top:749.00px;width:2.00px;height:27.20px;background:#d4d4d4"></div>
<div style="left:236.50px;top:749.00px;width:2.00px;height:27.20px;background:#d4d4d4"></div>
<div style="left:399.50px;top:749.00px;width:2.00px;height:27.20px;background:#d4d4d4"></div>
<div style="left:987.50px;top:749.00px;width:2.00px;height:27.20px;background:#d4d4d4"></div>
<div style="left:1092.00px;top:749.00px;width:2.00px;height:27.20px;background:#d4d4d4"></div>
<div style="left:1197.50px;top:749.00px;width:2.00px;height:27.20px;background:#d4d4d4"></div>
<div style="left:236.50px;top:774.20px;width:2.00px;height:27.30px;background:#d4d4d4"></div>
<div style="left:399.50px;top:774.20px;width:2.00px;height:27.30px;background:#d4d4d4"></div>
<div style="left:987.50px;top:774.20px;width:2.00px;height:27.30px;background:#d4d4d4"></div>
<div style="left:1092.00px;top:774.20px;width:2.00px;height:27.30px;background:#d4d4d4"></div>
<div style="left:1197.50px;top:774.20px;width:2.00px;height:27.30px;background:#d4d4d4"></div>
<div style="left:77.50px;top:799.50px;width:2.00px;height:27.50px;background:#d4d4d4"></div>
<div style="left:236.50px;top:799.50px;width:2.00px;height:27.50px;background:#d4d4d4"></div>
<div style="left:399.50px;top:799.50px;width:2.00px;height:27.50px;background:#d4d4d4"></div>
<div style="left:987.50px;top:799.50px;width:2.00px;height:27.50px;background:#d4d4d4"></div>
<div style="left:1092.00px;top:799.50px;width:2.00px;height:27.50px;background:#d4d4d4"></div>
<div style="left:1197.50px;top:799.50px;width:2.00px;height:27.50px;background:#d4d4d4"></div>
<div style="left:77.50px;top:825.00px;width:2.00px;height:27.00px;background:#d4d4d4"></div>
<div style="left:236.50px;top:825.00px;width:2.00px;height:27.00px;background:#d4d4d4"></div>
<div style="left:399.50px;top:825.00px;width:2.00px;height:27.00px;background:#d4d4d4"></div>
<div style="left:987.50px;top:825.00px;width:2.00px;height:27.00px;background:#d4d4d4"></div>
<div style="left:77.50px;top:850.00px;width:2.00px;height:57.00px;background:#d4d4d4"></div>
<div style="left:236.50px;top:850.00px;width:2.00px;height:57.00px;background:#d4d4d4"></div>
<div style="left:399.50px;top:850.00px;width:2.00px;height:57.00px;background:#d4d4d4"></div>
<div style="left:987.50px;top:850.00px;width:2.00px;height:57.00px;background:#d4d4d4"></div>
<div style="left:1092.00px;top:850.00px;width:2.00px;height:57.00px;background:#d4d4d4"></div>
<div style="left:1197.50px;top:850.00px;width:2.00px;height:57.00px;background:#d4d4d4"></div>
<div style="left:77.50px;top:905.00px;width:2.00px;height:26.70px;background:#d4d4d4"></div>
<div style="left:236.50px;top:905.00px;width:2.00px;height:26.70px;background:#d4d4d4"></div>
<div style="left:399.50px;top:905.00px;width:2.00px;height:26.70px;background:#d4d4d4"></div>
<div style="left:987.50px;top:905.00px;width:2.00px;height:26.70px;background:#d4d4d4"></div>
<div style="left:1092.00px;top:905.00px;width:2.00px;height:26.70px;background:#d4d4d4"></div>
<div style="left:1197.50px;top:905.00px;width:2.00px;height:26.70px;background:#d4d4d4"></div>
<div style="left:77.50px;top:929.70px;width:2.00px;height:27.14px;background:#d4d4d4"></div>
<div style="left:236.50px;top:929.70px;width:2.00px;height:27.14px;background:#d4d4d4"></div>
<div style="left:399.50px;top:929.70px;width:2.00px;height:27.14px;background:#d4d4d4"></div>
<div style="left:987.50px;top:929.70px;width:2.00px;height:27.14px;background:#d4d4d4"></div>
<div style="left:1092.00px;top:929.70px;width:2.00px;height:27.14px;background:#d4d4d4"></div>
<div style="left:1197.50px;top:929.70px;width:2.00px;height:27.14px;background:#d4d4d4"></div>
<div style="left:77.50px;top:954.84px;width:2.00px;height:27.14px;background:#d4d4d4"></div>
<div style="left:236.50px;top:954.84px;width:2.00px;height:27.14px;background:#d4d4d4"></div>
<div style="left:399.50px;top:954.84px;width:2.00px;height:27.14px;background:#d4d4d4"></div>
<div style="left:987.50px;top:954.84px;width:2.00px;height:27.14px;background:#d4d4d4"></div>
<div style="left:1092.00px;top:954.84px;width:2.00px;height:27.14px;background:#d4d4d4"></div>
<div style="left:1197.50px;top:954.84px;width:2.00px;height:27.14px;background:#d4d4d4"></div>
<div style="left:77.50px;top:979.98px;width:2.00px;height:27.14px;background:#d4d4d4"></div>
<div style="left:236.50px;top:979.98px;width:2.00px;height:27.14px;background:#d4d4d4"></div>
<div style="left:399.50px;top:979.98px;width:2.00px;height:27.14px;background:#d4d4d4"></div>
<div style="left:987.50px;top:979.98px;width:2.00px;height:27.14px;background:#d4d4d4"></div>
<div style="left:1092.00px;top:979.98px;width:2.00px;height:27.14px;background:#d4d4d4"></div>
<div style="left:1197.50px;top:979.98px;width:2.00px;height:27.14px;background:#d4d4d4"></div>
<div style="left:77.50px;top:1005.12px;width:2.00px;height:27.14px;background:#d4d4d4"></div>
<div style="left:236.50px;top:1005.12px;width:2.00px;height:27.14px;background:#d4d4d4"></div>
<div style="left:399.50px;top:1005.12px;width:2.00px;height:27.14px;background:#d4d4d4"></div>
<div style="left:987.50px;top:1005.12px;width:2.00px;height:27.14px;background:#d4d4d4"></div>
<div style="left:1092.00px;top:1005.12px;width:2.00px;height:27.14px;background:#d4d4d4"></div>
<div style="left:1197.50px;top:1005.12px;width:2.00px;height:27.14px;background:#d4d4d4"></div>
<div style="left:77.50px;top:1030.26px;width:2.00px;height:27.14px;background:#d4d4d4"></div>
<div style="left:236.50px;top:1030.26px;width:2.00px;height:27.14px;background:#d4d4d4"></div>
<div style="left:399.50px;top:1030.26px;width:2.00px;height:27.14px;background:#d4d4d4"></div>
<div style="left:987.50px;top:1030.26px;width:2.00px;height:27.14px;background:#d4d4d4"></div>
<div style="left:1092.00px;top:1030.26px;width:2.00px;height:27.14px;background:#d4d4d4"></div>
<div style="left:1197.50px;top:1030.26px;width:2.00px;height:27.14px;background:#d4d4d4"></div>
<div style="left:77.50px;top:1055.40px;width:2.00px;height:27.14px;background:#d4d4d4"></div>
<div style="left:236.50px;top:1055.40px;width:2.00px;height:27.14px;background:#d4d4d4"></div>
<div style="left:399.50px;top:1055.40px;width:2.00px;height:27.14px;background:#d4d4d4"></div>
<div style="left:987.50px;top:1055.40px;width:2.00px;height:27.14px;background:#d4d4d4"></div>
<div style="left:1092.00px;top:1055.40px;width:2.00px;height:27.14px;background:#d4d4d4"></div>
<div style="left:1197.50px;top:1055.40px;width:2.00px;height:27.14px;background:#d4d4d4"></div>
<div style="left:77.50px;top:1080.54px;width:2.00px;height:27.14px;background:#d4d4d4"></div>
<div style="left:236.50px;top:1080.54px;width:2.00px;height:27.14px;background:#d4d4d4"></div>
<div style="left:399.50px;top:1080.54px;width:2.00px;height:27.14px;background:#d4d4d4"></div>
<div style="left:987.50px;top:1080.54px;width:2.00px;height:27.14px;background:#d4d4d4"></div>
<div style="left:1092.00px;top:1080.54px;width:2.00px;height:27.14px;background:#d4d4d4"></div>
<div style="left:1197.50px;top:1080.54px;width:2.00px;height:27.14px;background:#d4d4d4"></div>
<div style="left:77.50px;top:1105.68px;width:2.00px;height:27.14px;background:#d4d4d4"></div>
<div style="left:236.50px;top:1105.68px;width:2.00px;height:27.14px;background:#d4d4d4"></div>
<div style="left:399.50px;top:1105.68px;width:2.00px;height:27.14px;background:#d4d4d4"></div>
<div style="left:987.50px;top:1105.68px;width:2.00px;height:27.14px;background:#d4d4d4"></div>
<div style="left:1092.00px;top:1105.68px;width:2.00px;height:27.14px;background:#d4d4d4"></div>
<div style="left:1197.50px;top:1105.68px;width:2.00px;height:27.14px;background:#d4d4d4"></div>
<div style="left:77.50px;top:1130.82px;width:2.00px;height:27.14px;background:#d4d4d4"></div>
<div style="left:236.50px;top:1130.82px;width:2.00px;height:27.14px;background:#d4d4d4"></div>
<div style="left:399.50px;top:1130.82px;width:2.00px;height:27.14px;background:#d4d4d4"></div>
<div style="left:987.50px;top:1130.82px;width:2.00px;height:27.14px;background:#d4d4d4"></div>
<div style="left:1092.00px;top:1130.82px;width:2.00px;height:27.14px;background:#d4d4d4"></div>
<div style="left:1197.50px;top:1130.82px;width:2.00px;height:27.14px;background:#d4d4d4"></div>
<div style="left:77.50px;top:1155.96px;width:2.00px;height:27.84px;background:#d4d4d4"></div>
<div style="left:236.50px;top:1155.96px;width:2.00px;height:27.84px;background:#d4d4d4"></div>
<div style="left:399.50px;top:1155.96px;width:2.00px;height:27.84px;background:#d4d4d4"></div>
<div style="left:987.50px;top:1155.96px;width:2.00px;height:27.84px;background:#d4d4d4"></div>
<div style="left:1092.00px;top:1155.96px;width:2.00px;height:27.84px;background:#d4d4d4"></div>
<div style="left:1197.50px;top:1155.96px;width:2.00px;height:27.84px;background:#d4d4d4"></div>
<div style="left:77.50px;top:649.40px;width:912.00px;height:2.00px;background:#000"></div>
<div style="left:77.50px;top:699.00px;width:912.00px;height:2.00px;background:#000"></div>
<div style="left:77.50px;top:724.00px;width:912.00px;height:2.00px;background:#000"></div>
<div style="left:77.50px;top:749.00px;width:912.00px;height:2.00px;background:#000"></div>
<div style="left:77.50px;top:649.40px;width:2.00px;height:101.60px;background:#000"></div>
<div style="left:987.50px;top:649.40px;width:2.00px;height:101.60px;background:#000"></div>
<div style="left:236.50px;top:649.40px;width:2.00px;height:76.60px;background:#000"></div>
<div style="left:399.50px;top:649.40px;width:2.00px;height:101.60px;background:#000"></div>
<div style="left:40.00px;top:825.00px;width:1160.00px;height:2.00px;background:#000"></div>
<div style="left:987.50px;top:850.00px;width:212.50px;height:2.00px;background:#000"></div>
<div style="left:40.00px;top:905.00px;width:1160.00px;height:2.00px;background:#000"></div>
<div style="left:40.00px;top:929.70px;width:1160.00px;height:2.00px;background:#000"></div>
<div style="left:40.00px;top:954.84px;width:1160.00px;height:2.00px;background:#000"></div>
<div style="left:40.00px;top:979.98px;width:1160.00px;height:2.00px;background:#000"></div>
<div style="left:40.00px;top:1005.12px;width:1160.00px;height:2.00px;background:#000"></div>
<div style="left:40.00px;top:1030.26px;width:1160.00px;height:2.00px;background:#000"></div>
<div style="left:40.00px;top:1055.40px;width:1160.00px;height:2.00px;background:#000"></div>
<div style="left:40.00px;top:1080.54px;width:1160.00px;height:2.00px;background:#000"></div>
<div style="left:40.00px;top:1105.68px;width:1160.00px;height:2.00px;background:#000"></div>
<div style="left:40.00px;top:1130.82px;width:1160.00px;height:2.00px;background:#000"></div>
<div style="left:40.00px;top:1155.96px;width:1160.00px;height:2.00px;background:#000"></div>
<div style="left:40.00px;top:1181.80px;width:1160.00px;height:2.00px;background:#000"></div>
<div style="left:39.50px;top:825.00px;width:2.00px;height:358.80px;background:#000"></div>
<div style="left:77.50px;top:825.00px;width:2.00px;height:358.80px;background:#000"></div>
<div style="left:236.50px;top:825.00px;width:2.00px;height:358.80px;background:#000"></div>
<div style="left:399.50px;top:825.00px;width:2.00px;height:358.80px;background:#000"></div>
<div style="left:987.50px;top:825.00px;width:2.00px;height:358.80px;background:#000"></div>
<div style="left:1092.00px;top:850.00px;width:2.00px;height:333.80px;background:#000"></div>
<div style="left:1197.50px;top:850.00px;width:2.00px;height:333.80px;background:#000"></div>
<div class="t" style="left:44.20px;top:376.13px;font-weight:bold;transform:scaleX(0.8);transform-origin:0 0;color:#000">RENCANA KEGIATAN DAN ANGGARAN MADRASAH</div>
<div class="t" style="left:44.20px;top:401.26px;font-weight:bold;transform:scaleX(0.82);transform-origin:0 0;color:#000">TAHUN PELAJARAN 2025-2026</div>
<div class="t" style="left:44.20px;top:451.52px;transform:scaleX(0.82);transform-origin:0 0;color:#000">NPSN</div>
<div class="t" style="left:241.70px;top:451.52px;transform:scaleX(0.82);transform-origin:0 0;color:#000">31645897</div>
<div class="t" style="left:44.20px;top:476.65px;transform:scaleX(0.82);transform-origin:0 0;color:#000">Nama Madrasah</div>
<div class="t" style="left:241.70px;top:476.65px;transform:scaleX(0.82);transform-origin:0 0;color:#000">RA Al Barokah</div>
<div class="t" style="left:44.20px;top:501.78px;transform:scaleX(0.82);transform-origin:0 0;color:#000">Alamat Kabupaten</div>
<div class="t" style="left:241.70px;top:501.78px;transform:scaleX(0.82);transform-origin:0 0;color:#000">Jalan Pangandaran No. 37</div>
<div class="t" style="left:44.20px;top:552.04px;font-weight:bold;transform:scaleX(0.8);transform-origin:0 0;color:#000">A. PENERIMAAN</div>
<div class="t" style="left:44.20px;top:602.30px;font-weight:bold;transform:scaleX(0.8);transform-origin:0 0;color:#000">Sumber Dana :</div>
<div class="t" style="left:-242.00px;width:800px;text-align:center;top:665.70px;font-weight:bold;transform:scaleX(0.8);transform-origin:50% 0;color:#000">No. Kode</div>
<div class="t" style="left:-81.00px;width:800px;text-align:center;top:665.70px;font-weight:bold;transform:scaleX(0.8);transform-origin:50% 0;color:#000">Penerimaan</div>
<div class="t" style="left:294.50px;width:800px;text-align:center;top:665.70px;font-weight:bold;transform:scaleX(0.8);transform-origin:50% 0;color:#000">Jumlah Penerimaan</div>
<div class="t" style="left:82.70px;top:702.00px;transform:scaleX(0.82);transform-origin:0 0;color:#000">4.3.1.01.</div>
<div class="t" style="left:241.70px;top:702.00px;transform:scaleX(0.82);transform-origin:0 0;color:#000">BOS Reguler</div>
<div class="t" style="left:410.90px;top:702.00px;transform:scaleX(0.8);transform-origin:0 0;color:#000">Rp</div>
<div class="t" style="left:176.50px;width:800px;text-align:right;top:702.00px;transform:scaleX(0.858);transform-origin:100% 0;color:#000">33.000.000</div>
<div class="t" style="left:82.70px;top:727.00px;font-weight:bold;transform:scaleX(0.8);transform-origin:0 0;color:#000">Total Penerimaan</div>
<div class="t" style="left:410.90px;top:727.00px;font-weight:bold;transform:scaleX(0.8);transform-origin:0 0;color:#000">Rp</div>
<div class="t" style="left:176.50px;width:800px;text-align:right;top:727.00px;font-weight:bold;transform:scaleX(0.848);transform-origin:100% 0;color:#000">33.000.000</div>
<div class="t" style="left:44.20px;top:777.50px;font-weight:bold;transform:scaleX(0.8);transform-origin:0 0;color:#000">B. BELANJA</div>
<div class="t" style="left:-340.75px;width:800px;text-align:center;top:854.00px;font-weight:bold;transform:scaleX(0.8);transform-origin:50% 0;color:#000">NO</div>
<div class="t" style="left:-242.00px;width:800px;text-align:center;top:854.00px;font-weight:bold;transform:scaleX(0.8);transform-origin:50% 0;color:#000">KODE KEGIATAN</div>
<div class="t" style="left:-81.00px;width:800px;text-align:center;top:854.00px;font-weight:bold;transform:scaleX(0.8);transform-origin:50% 0;color:#000">KODE REKENING</div>
<div class="t" style="left:294.50px;width:800px;text-align:center;top:854.00px;font-weight:bold;transform:scaleX(0.8);transform-origin:50% 0;color:#000">URAIAN BELANJA</div>
<div style="left:988.5px;top:826px;width:209.5px;height:25px;overflow:hidden"><div class="t" style="left:97.90px;top:0.00px;font-weight:bold;transform:scaleX(0.775);transform-origin:0 0">RINCIAN PERHITUNGAN</div></div>
<div class="t" style="left:640.75px;width:800px;text-align:center;top:866.50px;font-weight:bold;transform:scaleX(0.8);transform-origin:50% 0;color:#000">VOLUME</div>
<div class="t" style="left:745.75px;width:800px;text-align:center;top:866.50px;font-weight:bold;transform:scaleX(0.8);transform-origin:50% 0;color:#000">SATUAN</div>
<div class="t" style="left:44.20px;top:907.70px;transform:scaleX(0.82);transform-origin:0 0;color:#000">A</div>
<div class="t" style="left:82.70px;top:907.70px;transform:scaleX(0.82);transform-origin:0 0;color:#000">Standar Isi</div>
<div class="t" style="left:-405.00px;width:800px;text-align:right;top:907.70px;transform:scaleX(0.82);transform-origin:100% 0;color:#000">0</div>
<div class="t" style="left:183.00px;width:800px;text-align:right;top:907.70px;transform:scaleX(0.82);transform-origin:100% 0;color:#000">0</div>
<div class="t" style="left:287.50px;width:800px;text-align:right;top:907.70px;transform:scaleX(0.82);transform-origin:100% 0;color:#000">0</div>
<div class="t" style="left:393.00px;width:800px;text-align:right;top:907.70px;transform:scaleX(0.82);transform-origin:100% 0;color:#000">0</div>
<div class="t" style="left:-727.00px;width:800px;text-align:right;top:932.84px;transform:scaleX(0.82);transform-origin:100% 0;color:#000">1</div>
<div class="t" style="left:82.70px;top:932.84px;transform:scaleX(0.82);transform-origin:0 0;color:#000">02.02.01</div>
<div class="t" style="left:241.70px;top:932.84px;transform:scaleX(0.82);transform-origin:0 0;color:#000">5.1.02.01.01.0052</div>
<div class="t" style="left:404.70px;top:932.84px;transform:scaleX(0.82);transform-origin:0 0;color:#000">Konsumsi Kegiatan Sustained Silent Reading</div>
<div class="t" style="left:287.50px;width:800px;text-align:right;top:932.84px;transform:scaleX(0.82);transform-origin:100% 0;color:#000">10</div>
<div class="t" style="left:1097.20px;top:932.84px;transform:scaleX(0.82);transform-origin:0 0;color:#000">kotak</div>
<div class="t" style="left:-727.00px;width:800px;text-align:right;top:957.98px;transform:scaleX(0.82);transform-origin:100% 0;color:#000">2</div>
<div class="t" style="left:82.70px;top:957.98px;transform:scaleX(0.82);transform-origin:0 0;color:#000">02.02.01</div>
<div class="t" style="left:241.70px;top:957.98px;transform:scaleX(0.82);transform-origin:0 0;color:#000">5.1.02.01.01.0024</div>
<div class="t" style="left:404.70px;top:957.98px;transform:scaleX(0.82);transform-origin:0 0;color:#000">Penyediaan Alat Tulis Keg. Sustained Silent: Kertas A4</div>
<div class="t" style="left:287.50px;width:800px;text-align:right;top:957.98px;transform:scaleX(0.82);transform-origin:100% 0;color:#000">3</div>
<div class="t" style="left:1097.20px;top:957.98px;transform:scaleX(0.82);transform-origin:0 0;color:#000">rim</div>
<div class="t" style="left:-727.00px;width:800px;text-align:right;top:983.12px;transform:scaleX(0.82);transform-origin:100% 0;color:#000">3</div>
<div class="t" style="left:82.70px;top:983.12px;transform:scaleX(0.82);transform-origin:0 0;color:#000">02.02.01</div>
<div class="t" style="left:241.70px;top:983.12px;transform:scaleX(0.82);transform-origin:0 0;color:#000">5.1.02.01.01.0026</div>
<div class="t" style="left:404.70px;top:983.12px;transform:scaleX(0.82);transform-origin:0 0;color:#000">Penyediaan Alat Tulis Keg. Sustained Silent: Tinta Epson 001</div>
<div class="t" style="left:287.50px;width:800px;text-align:right;top:983.12px;transform:scaleX(0.82);transform-origin:100% 0;color:#000">4</div>
<div class="t" style="left:1097.20px;top:983.12px;transform:scaleX(0.82);transform-origin:0 0;color:#000">pcs</div>
<div class="t" style="left:-727.00px;width:800px;text-align:right;top:1008.26px;transform:scaleX(0.82);transform-origin:100% 0;color:#000">4</div>
<div class="t" style="left:82.70px;top:1008.26px;transform:scaleX(0.82);transform-origin:0 0;color:#000">02.06.01</div>
<div class="t" style="left:241.70px;top:1008.26px;transform:scaleX(0.82);transform-origin:0 0;color:#000">5.1.02.01.01.0052</div>
<div class="t" style="left:404.70px;top:1008.26px;transform:scaleX(0.82);transform-origin:0 0;color:#000">Konsumsi Keg. Pengembangan RPP Forum Tutor</div>
<div class="t" style="left:287.50px;width:800px;text-align:right;top:1008.26px;transform:scaleX(0.82);transform-origin:100% 0;color:#000">10</div>
<div class="t" style="left:1097.20px;top:1008.26px;transform:scaleX(0.82);transform-origin:0 0;color:#000">kotak</div>
<div class="t" style="left:44.20px;top:1033.40px;transform:scaleX(0.82);transform-origin:0 0;color:#000">B</div>
<div class="t" style="left:82.70px;top:1033.40px;transform:scaleX(0.82);transform-origin:0 0;color:#000">Standar Proses</div>
<div class="t" style="left:-405.00px;width:800px;text-align:right;top:1033.40px;transform:scaleX(0.82);transform-origin:100% 0;color:#000">0</div>
<div class="t" style="left:183.00px;width:800px;text-align:right;top:1033.40px;transform:scaleX(0.82);transform-origin:100% 0;color:#000">0</div>
<div class="t" style="left:287.50px;width:800px;text-align:right;top:1033.40px;transform:scaleX(0.82);transform-origin:100% 0;color:#000">0</div>
<div class="t" style="left:393.00px;width:800px;text-align:right;top:1033.40px;transform:scaleX(0.82);transform-origin:100% 0;color:#000">0</div>
<div class="t" style="left:-727.00px;width:800px;text-align:right;top:1058.54px;transform:scaleX(0.82);transform-origin:100% 0;color:#000">1</div>
<div class="t" style="left:82.70px;top:1058.54px;transform:scaleX(0.82);transform-origin:0 0;color:#000">03.01.01</div>
<div class="t" style="left:241.70px;top:1058.54px;transform:scaleX(0.82);transform-origin:0 0;color:#000">5.1.02.01.01.0052</div>
<div class="t" style="left:404.70px;top:1058.54px;transform:scaleX(0.82);transform-origin:0 0;color:#000">Konsumsi SPMB 2026/2027</div>
<div class="t" style="left:287.50px;width:800px;text-align:right;top:1058.54px;transform:scaleX(0.82);transform-origin:100% 0;color:#000">20</div>
<div class="t" style="left:1097.20px;top:1058.54px;transform:scaleX(0.82);transform-origin:0 0;color:#000">kotak</div>
<div class="t" style="left:-727.00px;width:800px;text-align:right;top:1083.68px;transform:scaleX(0.82);transform-origin:100% 0;color:#000">2</div>
<div class="t" style="left:82.70px;top:1083.68px;transform:scaleX(0.82);transform-origin:0 0;color:#000">03.01.01</div>
<div class="t" style="left:241.70px;top:1083.68px;transform:scaleX(0.82);transform-origin:0 0;color:#000">5.1.02.01.01.0026</div>
<div class="t" style="left:404.70px;top:1083.68px;transform:scaleX(0.82);transform-origin:0 0;color:#000">Belanja Banner SPMP</div>
<div class="t" style="left:287.50px;width:800px;text-align:right;top:1083.68px;transform:scaleX(0.82);transform-origin:100% 0;color:#000">1</div>
<div class="t" style="left:1097.20px;top:1083.68px;transform:scaleX(0.82);transform-origin:0 0;color:#000">Buah</div>
<div class="t" style="left:-727.00px;width:800px;text-align:right;top:1108.82px;transform:scaleX(0.82);transform-origin:100% 0;color:#000">3</div>
<div class="t" style="left:82.70px;top:1108.82px;transform:scaleX(0.82);transform-origin:0 0;color:#000">03.01.01</div>
<div class="t" style="left:241.70px;top:1108.82px;transform:scaleX(0.82);transform-origin:0 0;color:#000">5.1.02.01.01.0026</div>
<div class="t" style="left:404.70px;top:1108.82px;transform:scaleX(0.82);transform-origin:0 0;color:#000">Belanja Cetak Pamflet</div>
<div class="t" style="left:287.50px;width:800px;text-align:right;top:1108.82px;transform:scaleX(0.82);transform-origin:100% 0;color:#000">20</div>
<div class="t" style="left:1097.20px;top:1108.82px;transform:scaleX(0.82);transform-origin:0 0;color:#000">lembar</div>
<div class="t" style="left:-727.00px;width:800px;text-align:right;top:1133.96px;transform:scaleX(0.82);transform-origin:100% 0;color:#000">4</div>
<div class="t" style="left:82.70px;top:1133.96px;transform:scaleX(0.82);transform-origin:0 0;color:#000">03.01.01</div>
<div class="t" style="left:241.70px;top:1133.96px;transform:scaleX(0.82);transform-origin:0 0;color:#000">5.1.02.01.01.0024</div>
<div class="t" style="left:404.70px;top:1133.96px;transform:scaleX(0.82);transform-origin:0 0;color:#000">Kertas A4 70 gsm</div>
<div class="t" style="left:287.50px;width:800px;text-align:right;top:1133.96px;transform:scaleX(0.82);transform-origin:100% 0;color:#000">3</div>
<div class="t" style="left:1097.20px;top:1133.96px;transform:scaleX(0.82);transform-origin:0 0;color:#000">rim</div>
<div class="t" style="left:-727.00px;width:800px;text-align:right;top:1159.80px;transform:scaleX(0.82);transform-origin:100% 0;color:#000">5</div>
<div class="t" style="left:82.70px;top:1159.80px;transform:scaleX(0.82);transform-origin:0 0;color:#000">03.01.02</div>
<div class="t" style="left:241.70px;top:1159.80px;transform:scaleX(0.82);transform-origin:0 0;color:#000">5.1.02.01.01.0052</div>
<div class="t" style="left:404.70px;top:1159.80px;transform:scaleX(0.82);transform-origin:0 0;color:#000">Konsumsi Pendataan Ulang Peserta Didik Lama</div>
<div class="t" style="left:287.50px;width:800px;text-align:right;top:1159.80px;transform:scaleX(0.82);transform-origin:100% 0;color:#000">20</div>
<div class="t" style="left:1097.20px;top:1159.80px;transform:scaleX(0.82);transform-origin:0 0;color:#000">kotak</div>

</div></body></html>
